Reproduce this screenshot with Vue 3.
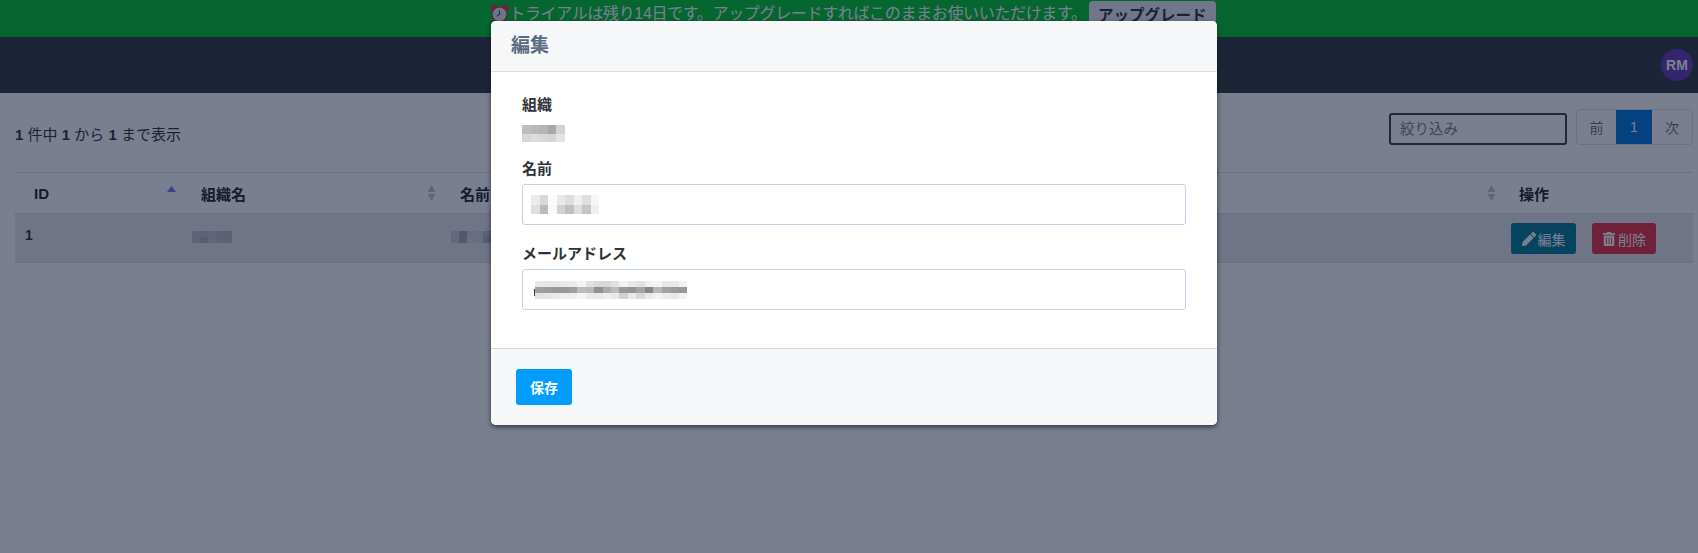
<script setup>
const org = [
  ['#bcbcbe', '#b8b8ba', '#b4b4b6', '#a8a8aa', '#d2d3d3'],
  ['#d6d6d6', '#dcdcdc', '#d8d8d8', '#d4d4d4', '#e4e4e2']
]
const name = [
  ['#ebebeb', '#d8d8d8', '#fbfbfb', '#e9e9e9', '#dedede', '#f0f0f0', '#dfdfdf', '#f6f6f6'],
  ['#dedede', '#bbbbbb', '#f9f9f9', '#d2d2d2', '#c0c0c0', '#dedede', '#c4c4c4', '#efefef']
]
const email = [
  ['#e9e9e9', '#e6e6e6', '#e6e6e6', '#e9e9e9', '#ececec', '#f4f4f4', '#e0e0e0', '#d8d8d8', '#d8d8d8', '#e2e2e2', '#f2f2f2', '#e9e9e9', '#e2e2e2', '#f0f0f0', '#f5f5f5', '#e8e8e8', '#e8e8e8', '#f2f2f2'],
  ['#a0a0a2', '#9c9c9e', '#98989a', '#98989a', '#9e9ea0', '#bcbcbc', '#b8b8b8', '#8e9092', '#a8acae', '#bcbcbc', '#98989a', '#949496', '#a4a4a6', '#88888c', '#b4b8b8', '#a2a2a4', '#9c9c9e', '#98989c'],
  ['#e2e2e2', '#e6e6e6', '#e9e9e9', '#ededed', '#ededed', '#f5f5f5', '#e9e9e9', '#e9e9e9', '#ededed', '#e9e9e9', '#d0d0d0', '#e9e9e9', '#d8d8d8', '#e9e9e9', '#f2f2f2', '#ececec', '#e8e8e8', '#f2f2f2']
]
const rowOrg = [['#c4c6ca', '#c2c4c8', '#c6c8cc', '#bdbfc4', '#bbbdc2'], ['#c2c4c8', '#b4b6bc', '#c8cace', '#bfc1c6', '#bdbfc4']]
const rowName = [['#d0d2d6', '#a8aab0', '#d8dade', '#d6d8dc', '#bdbfc4'], ['#ccced2', '#acaeb4', '#dcdee2', '#d8dade', '#b4b6bc']]
</script>

<template>
  <div class="page">
    <div class="banner">
      <svg class="clock" viewBox="0 0 20 20" aria-hidden="true">
        <circle cx="4" cy="4" r="3.4" fill="#e0334a" />
        <circle cx="16" cy="4" r="3.4" fill="#e0334a" />
        <path d="M4 18l2-3M16 18l-2-3" stroke="#c02a3e" stroke-width="1.6" />
        <circle cx="10" cy="11" r="8.400" fill="#d0303f" />
        <circle cx="10" cy="11" r="7.200" fill="#e6e8ec" />
        <path d="M10 7v4l-3 2" fill="none" stroke="#555" stroke-width="1.2" />
      </svg>
      <span class="banner-text">トライアルは残り14日です。アップグレードすればこのままお使いいただけます。</span>
      <button class="upgrade">アップグレード</button>
    </div>

    <header class="nav">
      <span class="avatar">RM</span>
    </header>

    <main class="content">
      <div class="controls">
        <p class="info"><b>1</b> 件中 <b>1</b> から <b>1</b> まで表示</p>
        <input class="filter" placeholder="絞り込み" />
        <nav class="pager">
          <span class="pg prev">前</span>
          <span class="pg on">1</span>
          <span class="pg">次</span>
        </nav>
      </div>

      <div class="table">
        <div class="row head">
          <div class="th first">
            ID
            <svg class="sort" viewBox="0 0 9 16"><path d="M4.500 1L9 7H0z" fill="#6f7bff" /></svg>
          </div>
          <div class="th">
            組織名
            <svg class="sort" viewBox="0 0 9 16"><path d="M4.500 0L8.500 7H.5zM4.500 16L.5 9H8.500z" fill="#c4c7cc" /></svg>
          </div>
          <div class="th mid">
            名前
            <svg class="sort" viewBox="0 0 9 16"><path d="M4.500 0L8.500 7H.5zM4.500 16L.5 9H8.500z" fill="#c4c7cc" /></svg>
          </div>
          <div class="th">操作</div>
        </div>
        <div class="row body">
          <div class="td id">1</div>
          <div class="td">
            <div class="mosaic small">
              <template v-for="(r, i) in rowOrg" :key="i">
                <i v-for="(c, j) in r" :key="j" :style="{ background: c }"></i>
              </template>
            </div>
          </div>
          <div class="td">
            <div class="mosaic small">
              <template v-for="(r, i) in rowName" :key="i">
                <i v-for="(c, j) in r" :key="j" :style="{ background: c }"></i>
              </template>
            </div>
          </div>
          <div class="td actions">
            <button class="act edit">
              <svg viewBox="0 0 512 512"><path fill="currentColor" d="M497.900 142.100l-46.100 46.100c-4.700 4.700-12.300 4.700-17 0l-111-111c-4.700-4.700-4.700-12.300 0-17l46.100-46.100c18.700-18.700 49.100-18.700 67.900 0l60.100 60.100c18.800 18.700 18.800 49.100 0 67.900zM284.200 99.800L21.600 362.400.4 483.900c-2.900 16.400 11.400 30.600 27.800 27.800l121.500-21.300 262.600-262.600c4.700-4.700 4.700-12.300 0-17l-111-111c-4.800-4.700-12.400-4.700-17.100 0z"/></svg>
              編集
            </button>
            <button class="act del">
              <svg viewBox="0 0 448 512"><path fill="currentColor" d="M32 464a48 48 0 0 0 48 48h288a48 48 0 0 0 48-48V128H32zm272-256a16 16 0 0 1 32 0v224a16 16 0 0 1-32 0zm-96 0a16 16 0 0 1 32 0v224a16 16 0 0 1-32 0zm-96 0a16 16 0 0 1 32 0v224a16 16 0 0 1-32 0zM432 32H312l-9.400-18.700A24 24 0 0 0 281.100 0H166.800a23.700 23.700 0 0 0-21.400 13.300L136 32H16A16 16 0 0 0 0 48v32a16 16 0 0 0 16 16h416a16 16 0 0 0 16-16V48a16 16 0 0 0-16-16z"/></svg>
              削除
            </button>
          </div>
        </div>
      </div>
    </main>

    <div class="overlay">
      <section class="modal">
        <h2 class="m-head">編集</h2>
        <div class="m-body">
          <label class="lab">組織</label>
          <div class="mosaic org">
            <template v-for="(r, i) in org" :key="i">
              <i v-for="(c, j) in r" :key="j" :style="{ background: c }"></i>
            </template>
          </div>
          <label class="lab">名前</label>
          <div class="field">
            <div class="mosaic nm">
              <template v-for="(r, i) in name" :key="i">
                <i v-for="(c, j) in r" :key="j" :style="{ background: c }"></i>
              </template>
            </div>
          </div>
          <label class="lab">メールアドレス</label>
          <div class="field mail">
            <span class="caret"></span>
            <div class="mosaic em">
              <template v-for="(r, i) in email" :key="i">
                <i v-for="(c, j) in r" :key="j" :style="{ background: c }"></i>
              </template>
            </div>
          </div>
        </div>
        <div class="m-foot">
          <button class="save">保存</button>
        </div>
      </section>
    </div>
  </div>
</template>

<style scoped>
.page {
  position: relative;
  height: 553px;
  overflow: hidden;
  background: #fff;
  font-family: "Liberation Sans", "Noto Sans CJK JP", sans-serif;
  font-size: 15px;
  color: #2c3038;
}
.banner {
  height: 37px;
  background: #00c82e;
  display: flex;
  align-items: flex-start;
  justify-content: center;
  padding-left: 8px;
  color: #fff;
  box-sizing: border-box;
}
.clock { width: 19px; height: 19px; margin-top: 4px; flex: none; }
.banner-text {
  font-size: 16px;
  line-height: 28px;
  letter-spacing: -.34px;
  margin-right: 2px;
}
.upgrade {
  margin-top: 1px;
  width: 127px;
  height: 26px;
  padding: 0;
  border: 0;
  border-radius: 4px;
  background: #eceef1;
  color: #333;
  font: bold 15.500px "Liberation Sans", "Noto Sans CJK JP", sans-serif;
}
.nav {
  height: 56px;
  background: #323a41;
  display: flex;
  align-items: center;
  justify-content: flex-end;
  padding-right: 5px;
}
.avatar {
  width: 32px;
  height: 32px;
  border-radius: 50%;
  background: #693ab5;
  color: #fff;
  font-weight: bold;
  font-size: 14px;
  display: flex;
  align-items: center;
  justify-content: center;
}
.content { padding: 16px 5px 0 15px; }
.controls { display: flex; align-items: flex-start; height: 36px; }
.info { margin: 0 auto 0 0; line-height: 20px; padding-top: 16px; font-size: 15px; color: #30343c; }
.filter {
  width: 178px;
  height: 32px;
  margin: 4px 9px 0 0;
  box-sizing: border-box;
  border: 2px solid #3c4050;
  border-radius: 3px;
  padding: 0 9px;
  font: 14.500px "Liberation Sans", "Noto Sans CJK JP", sans-serif;
  outline: none;
  background: #fff;
}
.filter::placeholder { color: #7b7f88; }
.pager {
  display: flex;
  width: 117px;
  height: 36px;
  box-sizing: border-box;
  border: 1px solid #dfe1e6;
  border-radius: 4px;
  overflow: hidden;
  font-size: 14px;
}
.pg { flex: 1; display: flex; align-items: center; justify-content: center; color: #6b6f78; }
.pg.prev { flex: none; width: 39px; }
.pg.on { flex: none; width: 36px; background: #0078dd; color: #fff; }
.table { margin-top: 27px; border-top: 1px solid #dfe1e6; }
.row { display: grid; grid-template-columns: 167px 259px 1fr 193px; }
.head { height: 40px; border-bottom: 1px solid #dcdee2; box-sizing: content-box; }
.th {
  display: flex;
  align-items: center;
  justify-content: space-between;
  padding: 0 5px 0 19px;
  font-weight: bold;
  font-size: 15px;
  color: #23262e;
}
.th.first { padding-right: 6px; }
.th.mid { padding-right: 4px; }
.sort { width: 9px; height: 16px; }
.body { height: 48px; background: #e8e9ea; border-bottom: 1px solid #dcdee2; }
.td { padding: 17px 0 0 10px; }
.td.id { padding: 11px 0 0 10px; font-weight: bold; line-height: 20px; font-size: 14px; }
.td.actions { padding: 9px 0 0 11px; display: flex; gap: 16px; align-items: flex-start; }
.act {
  height: 31px;
  border: 0;
  border-radius: 3px;
  color: #fff;
  padding: 0;
  font: 14px "Liberation Sans", "Noto Sans CJK JP", sans-serif;
  display: flex;
  align-items: center;
  justify-content: center;
  gap: 2px;
}
.act svg { width: 14px; height: 14px; }
.edit { width: 65px; background: #007d92; }
.del { width: 64px; background: #e63344; }
.overlay {
  position: absolute;
  inset: 0;
  background: rgba(10, 18, 50, .54);
  display: flex;
  justify-content: center;
  align-items: flex-start;
  padding: 21px 0 0 10px;
}
.modal {
  width: 726px;
  background: #fff;
  border-radius: 5px;
  overflow: hidden;
  box-shadow: 0 2px 5px rgba(10, 15, 30, .65);
}
.m-head {
  margin: 0;
  height: 50px;
  background: #f6f7f9;
  border-bottom: 1px solid #d8dde6;
  padding-left: 20px;
  font-size: 19px;
  font-weight: bold;
  line-height: 50px;
  color: #5a6b7f;
}
.m-body { padding: 22px 31px 38px; }
.lab { display: block; font-weight: bold; font-size: 15px; line-height: 21px; color: #2f3338; }
.field {
  position: relative;
  height: 41px;
  box-sizing: border-box;
  margin: 5px 0 18px;
  border: 1px solid #c6d0e4;
  border-radius: 3px;
  display: flex;
  align-items: center;
  padding-left: 8px;
}
.field.mail { margin-bottom: 0; padding-left: 12px; }
.caret {
  position: absolute;
  left: 11px;
  top: 19px;
  width: 2px;
  height: 7px;
  background: #3a3d45;
}
.mosaic { display: grid; filter: blur(.5px); }
.mosaic i { display: block; }
.org { width: 43px; height: 17px; margin: 10px 0 16px; grid-template-columns: repeat(5, 1fr); grid-template-rows: repeat(2, 1fr); }
.nm { width: 68px; height: 19px; grid-template-columns: repeat(8, 1fr); grid-template-rows: repeat(2, 1fr); }
.em { width: 152px; height: 18px; grid-template-columns: repeat(18, 1fr); grid-template-rows: repeat(3, 1fr); }
.small { width: 40px; height: 12px; grid-template-columns: repeat(5, 1fr); grid-template-rows: repeat(2, 1fr); }
.m-foot {
  background: #f6f7f9;
  border-top: 1px solid #d0d6e0;
  padding: 20px 25px 20px;
}
.save {
  display: block;
  width: 56px;
  height: 36px;
  border: 0;
  border-radius: 3px;
  background: #009dff;
  color: #fff;
  padding: 0;
  font: bold 14px "Liberation Sans", "Noto Sans CJK JP", sans-serif;
}
</style>
